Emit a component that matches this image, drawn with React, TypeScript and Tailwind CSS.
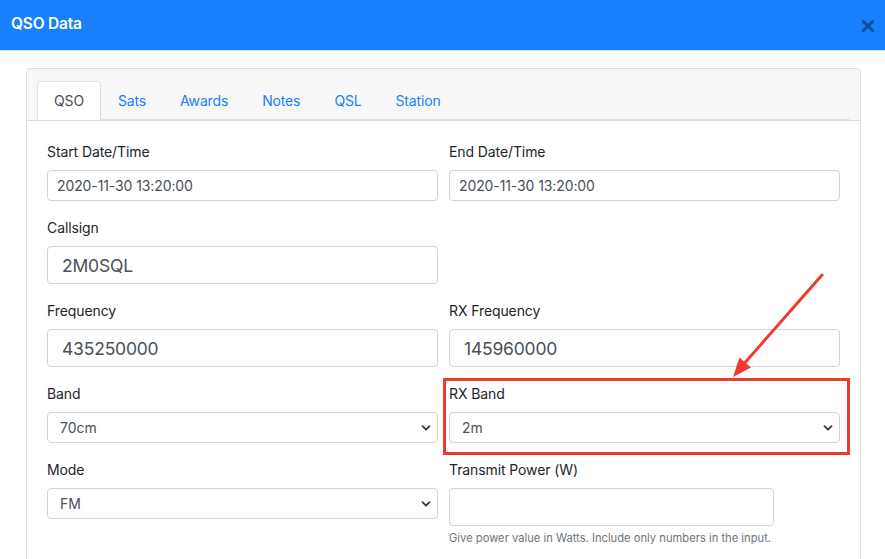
import React from "react"

const tabs = ["QSO", "Sats", "Awards", "Notes", "QSL", "Station"]

function Label({ children }: { children: React.ReactNode }) {
    return <div className="text-[14px] leading-[21px] tracking-[-0.1px] text-[#212529] mb-2">{children}</div>
}

function SmallInput({ value }: { value: string }) {
    return (
        <input
            readOnly
            defaultValue={value}
            className="w-full h-[31px] px-[9px] border border-[#ced4da] rounded-[4px] text-[14px] tracking-[-0.1px] text-[#495057] bg-white outline-none"
        />
    )
}

function LargeInput({ value, className = "w-full" }: { value: string; className?: string }) {
    return (
        <input
            readOnly
            defaultValue={value}
            className={`${className} h-[38px] px-[14px] border border-[#ced4da] rounded-[4px] text-[17.5px] tracking-[-0.2px] text-[#495057] bg-white outline-none`}
        />
    )
}

function Select({ value }: { value: string }) {
    return (
        <div className="w-full h-[31px] pl-[12px] pr-[6px] border border-[#ced4da] rounded-[4px] bg-white flex items-center justify-between text-[14px] text-[#495057]">
            <span>{value}</span>
            <svg width="10" height="10" viewBox="0 0 10 10" className="text-[#343a40]">
                <path d="M1.5 3.2 L5 6.7 L8.5 3.2" fill="none" stroke="currentColor" strokeWidth="1.8" strokeLinecap="round" strokeLinejoin="round" />
            </svg>
        </div>
    )
}

export default function App() {
    return (
        <div className="relative w-[885px] h-[559px] overflow-hidden bg-white" style={{ fontFamily: "Inter, 'Noto Sans', sans-serif" }}>
            {/* modal header */}
            <div className="h-[51px] bg-[#1880fc] border-b border-[#dee2e6] flex items-center justify-between pl-[11px] pr-[10px]">
                <h5 className="text-white text-[15.5px] font-semibold tracking-[-0.2px] pb-[3px]">QSO Data</h5>
                <svg width="14" height="14" viewBox="0 0 14 14" className="mt-[1px]">
                    <path d="M2.5 2.5 L11.5 11.5 M11.5 2.5 L2.5 11.5" stroke="#0e4d98" strokeWidth="3" strokeLinecap="round" />
                </svg>
            </div>

            {/* modal body */}
            <div className="pl-[26px] pt-[17px]">
                <div className="w-[835px] border border-[#dfdfdf] rounded-[4px]">
                    <div className="bg-[#f7f7f7] border-b border-[#dfdfdf] pt-[12px] px-[10px] rounded-t-[4px]">
                        <ul className="flex border-b border-[#dee2e6]">
                            {tabs.map((t, i) => (
                                <li
                                    key={t}
                                    className={
                                        i === 0
                                            ? "px-4 py-2 text-[14px] leading-[21px] tracking-[-0.15px] text-[#495057] bg-white border border-[#dee2e6] border-b-white rounded-t-[4px] -mb-px"
                                            : "px-4 py-2 text-[14px] leading-[21px] tracking-[-0.15px] text-[#1a7ffc] border border-transparent -mb-px"
                                    }
                                >
                                    {t}
                                </li>
                            ))}
                        </ul>
                    </div>

                    <div className="px-5 pt-5 pb-8">
                        <div className="grid grid-cols-2 gap-x-[11px]">
                            <div className="mb-4">
                                <Label>Start Date/Time</Label>
                                <SmallInput value="2020-11-30 13:20:00" />
                            </div>
                            <div className="mb-4">
                                <Label>End Date/Time</Label>
                                <SmallInput value="2020-11-30 13:20:00" />
                            </div>

                            <div className="mb-4">
                                <Label>Callsign</Label>
                                <LargeInput value="2M0SQL" />
                            </div>
                            <div className="mb-4" />

                            <div className="mb-4">
                                <Label>Frequency</Label>
                                <LargeInput value="435250000" />
                            </div>
                            <div className="mb-4">
                                <Label>RX Frequency</Label>
                                <LargeInput value="145960000" />
                            </div>

                            <div className="mb-4">
                                <Label>Band</Label>
                                <Select value="70cm" />
                            </div>
                            <div className="mb-4">
                                <Label>RX Band</Label>
                                <Select value="2m" />
                            </div>

                            <div className="mb-4">
                                <Label>Mode</Label>
                                <Select value="FM" />
                            </div>
                            <div className="mb-4">
                                <Label>Transmit Power (W)</Label>
                                <LargeInput value="" className="w-[325px]" />
                                <div className="mt-1 text-[11.2px] leading-[17px] text-[#6c757d]">
                                    Give power value in Watts. Include only numbers in the input.
                                </div>
                            </div>
                        </div>
                    </div>
                </div>
            </div>

            {/* annotation: highlight box + arrow */}
            <div className="absolute left-[443px] top-[378px] w-[407px] h-[77px] border-[3px] border-[#f13a2d]" />
            <svg className="absolute left-0 top-0 pointer-events-none" width="885" height="559">
                <line x1="822" y1="275" x2="742" y2="366" stroke="#f13a2d" strokeWidth="3" strokeLinecap="round" />
                <polygon points="733,377 739.5,357.5 751,367.5" fill="#f13a2d" />
            </svg>
        </div>
    )
}
